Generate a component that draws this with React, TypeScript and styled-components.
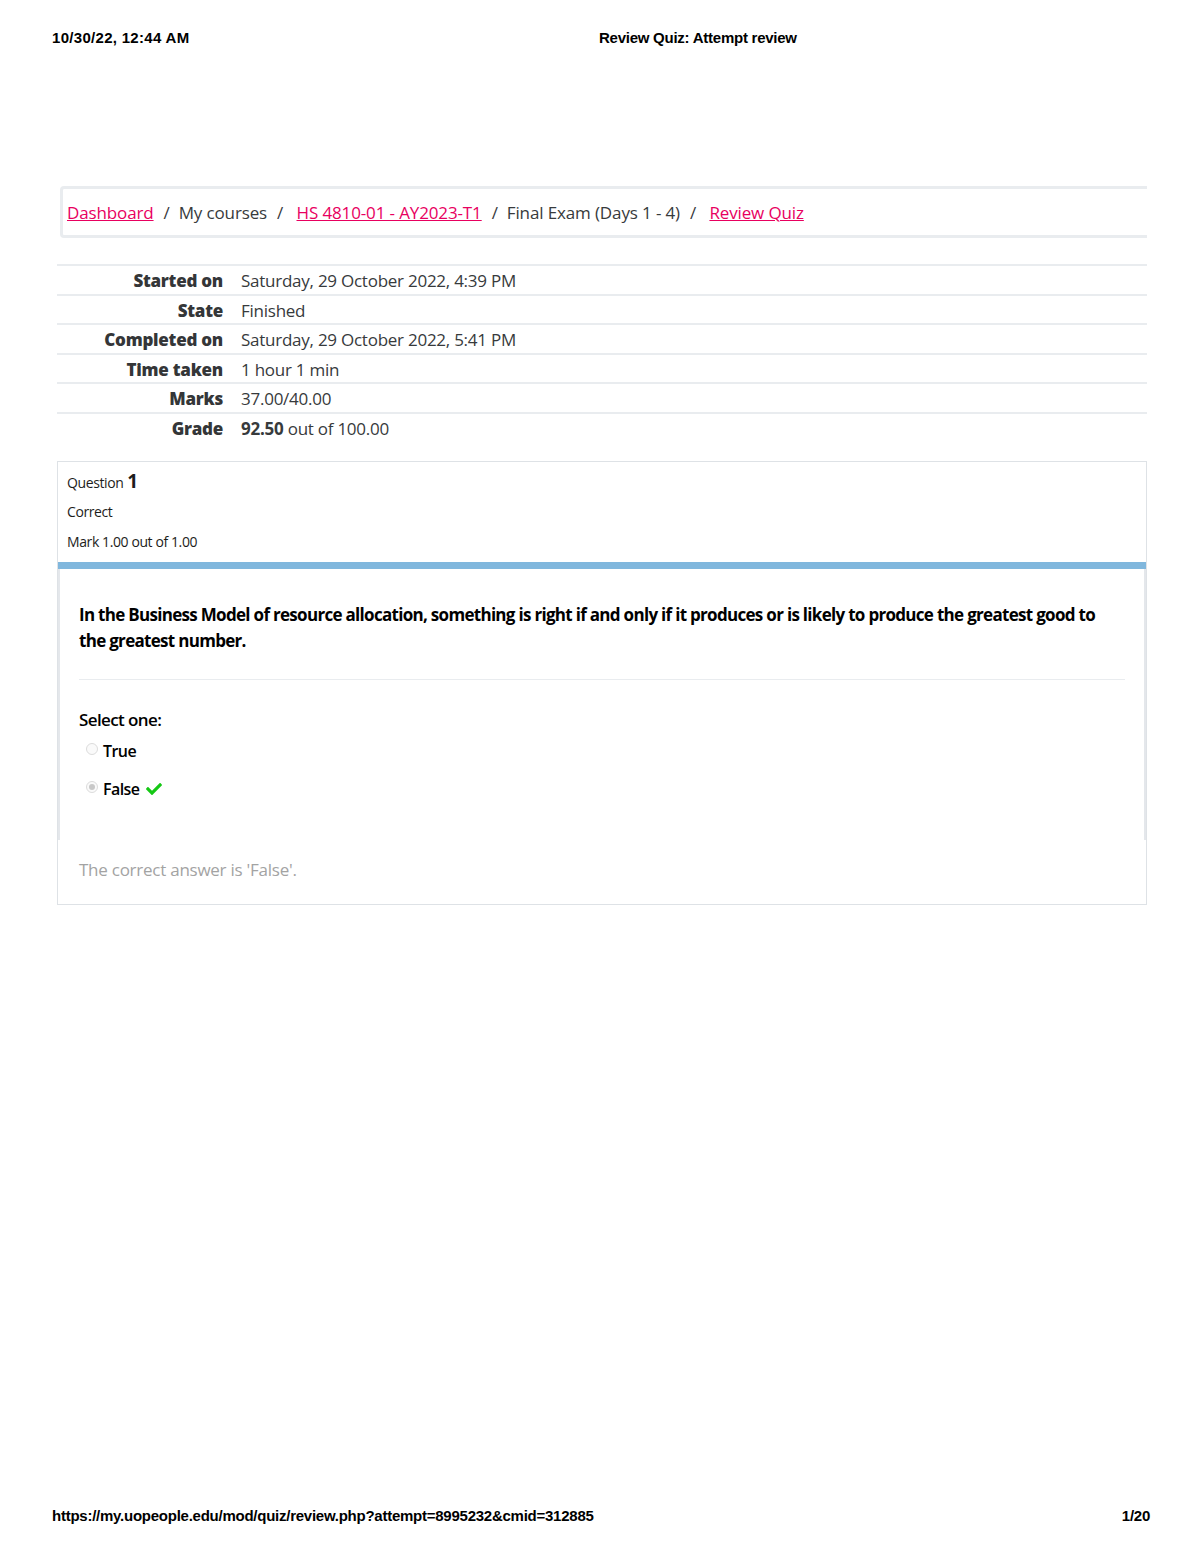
import React from "react";
import styled, { createGlobalStyle } from "styled-components";
import { FaCheck } from "react-icons/fa";

const GlobalStyle = createGlobalStyle`
  html, body {
    margin: 0;
    padding: 0;
    background: #ffffff;
  }
  body {
    font-family: "Open Sans", "Noto Sans", sans-serif;
    color: #373a3c;
  }
`;

const Page = styled.div`
  width: 1200px;
  min-height: 1553px;
  display: flex;
  flex-direction: column;
  box-sizing: border-box;
`;

const PrintBar = styled.div`
  display: grid;
  grid-template-columns: 547px 1fr;
  padding: 0 50px 0 52px;
  font-family: "Liberation Sans", Arial, sans-serif;
  font-weight: bold;
  font-size: 15px;
  letter-spacing: -0.25px;
  color: #000;
  align-items: center;
`;

const PrintHead = styled(PrintBar)`
  margin-top: 22px;
  height: 30px;
`;

const PrintFoot = styled(PrintBar)`
  margin-top: auto;
  margin-bottom: 29px;
  grid-template-columns: 1fr auto;
`;

const Stamp = styled.span`
  letter-spacing: 0.3px;
`;

const Main = styled.main`
  padding: 0 53px 0 57px;
  margin-top: 134px;
`;

const Breadcrumb = styled.nav`
  margin-left: 3px;
  height: 46px;
  border: 3px solid #e9ecef;
  border-right: none;
  border-radius: 4px 0 0 4px;
  display: flex;
  align-items: center;
  padding-left: 4px;
  font-size: 17px;
  letter-spacing: -0.13px;
  color: #373a3c;
`;

const Crumb = styled.a`
  color: #e8005f;
  text-decoration: underline;
`;

const Sep = styled.span`
  margin: 0 9px 0 10px;
`;

const Summary = styled.table`
  width: 100%;
  margin-top: 26px;
  border-collapse: collapse;
  border-top: 2px solid #e9ecef;
  font-size: 17px;
  letter-spacing: -0.25px;
`;

const Row = styled.tr<{ $last?: boolean }>`
  border-bottom: ${(p) => (p.$last ? "none" : "2px solid #e9ecef")};
`;

const Label = styled.th`
  width: 166px;
  height: 26px;
  text-align: right;
  font-weight: 800;
  padding: 1.6px 18px 0 0;
  color: #343638;
  white-space: nowrap;
`;

const Value = styled.td`
  padding: 1.6px 0 0;
  color: #373a3c;
`;

const Card = styled.section`
  margin-top: 19px;
  border: 1px solid #dee2e6;
`;

const Info = styled.div`
  padding: 6px 9px 6px;
  font-size: 14px;
  letter-spacing: -0.4px;
  color: #1d1d1b;
  line-height: 29.5px;
`;

const QNo = styled.span`
  font-size: 19px;
  font-weight: bold;
  line-height: 1;
  margin-left: 4px;
`;

const Bar = styled.div`
  height: 7px;
  background: #80b7dd;
`;

const Formulation = styled.div`
  border-left: 2px solid #e4e7eb;
  border-right: 2px solid #e4e7eb;
  padding: 33px 19px 40px 19px;
  color: #000;
`;

const QText = styled.div`
  font-size: 17px;
  font-weight: bold;
  letter-spacing: -0.7px;
  line-height: 26px;
  padding-bottom: 25px;
  border-bottom: 1px solid #e9ecef;
`;

const Prompt = styled.div`
  margin-top: 28px;
  font-size: 17px;
  font-weight: 600;
  letter-spacing: -0.6px;
`;

const Options = styled.div`
  display: flex;
  flex-direction: column;
  gap: 16px;
  margin-top: 9px;
  padding-left: 7px;
`;

const Option = styled.label`
  display: flex;
  align-items: center;
  font-size: 16px;
  font-weight: 600;
  letter-spacing: -0.55px;
  line-height: 22px;
`;

const Radio = styled.span<{ $checked?: boolean }>`
  width: 12px;
  height: 12px;
  border-radius: 50%;
  border: 1px solid #dcdcdc;
  background: #fafafa;
  box-sizing: border-box;
  margin-right: 5px;
  margin-top: -4px;
  display: flex;
  align-items: center;
  justify-content: center;
  &::after {
    content: "";
    width: 6px;
    height: 6px;
    border-radius: 50%;
    background: ${(p) => (p.$checked ? "#c8c8c8" : "transparent")};
  }
`;

const Tick = styled(FaCheck)`
  color: #15c815;
  font-size: 16px;
  margin-left: 6px;
`;

const Feedback = styled.div`
  padding: 18px 21px 23px;
  font-size: 17px;
  letter-spacing: -0.25px;
  color: #a3a3a3;
`;

const rows: [string, React.ReactNode][] = [
  ["Started on", "Saturday, 29 October 2022, 4:39 PM"],
  ["State", "Finished"],
  ["Completed on", "Saturday, 29 October 2022, 5:41 PM"],
  ["Time taken", "1 hour 1 min"],
  ["Marks", "37.00/40.00"],
  [
    "Grade",
    <>
      <b>92.50</b> out of 100.00
    </>,
  ],
];

export default function App() {
  return (
    <Page>
      <GlobalStyle />
      <PrintHead>
        <Stamp>10/30/22, 12:44 AM</Stamp>
        <span>Review Quiz: Attempt review</span>
      </PrintHead>

      <Main>
        <Breadcrumb>
          <Crumb href="#">Dashboard</Crumb>
          <Sep>/</Sep>
          <span>My courses</span>
          <Sep>/</Sep>
          <span>&nbsp;</span>
          <Crumb href="#">HS 4810-01 - AY2023-T1</Crumb>
          <Sep>/</Sep>
          <span>Final Exam (Days 1 - 4)</span>
          <Sep>/</Sep>
          <span>&nbsp;</span>
          <Crumb href="#">Review Quiz</Crumb>
        </Breadcrumb>

        <Summary>
          <tbody>
            {rows.map(([k, v], i) => (
              <Row key={k} $last={i === rows.length - 1}>
                <Label>{k}</Label>
                <Value>{v}</Value>
              </Row>
            ))}
          </tbody>
        </Summary>

        <Card>
          <Info>
            <div>
              Question<QNo>1</QNo>
            </div>
            <div>Correct</div>
            <div>Mark 1.00 out of 1.00</div>
          </Info>
          <Bar />
          <Formulation>
            <QText>
              In the Business Model of resource allocation, something is right if and only if it
              produces or is likely to produce the greatest good to the greatest number.
            </QText>
            <Prompt>Select one:</Prompt>
            <Options>
              <Option>
                <Radio />
                True
              </Option>
              <Option>
                <Radio $checked />
                False
                <Tick />
              </Option>
            </Options>
          </Formulation>
          <Feedback>The correct answer is 'False'.</Feedback>
        </Card>
      </Main>

      <PrintFoot>
        <span>https://my.uopeople.edu/mod/quiz/review.php?attempt=8995232&amp;cmid=312885</span>
        <span>1/20</span>
      </PrintFoot>
    </Page>
  );
}
